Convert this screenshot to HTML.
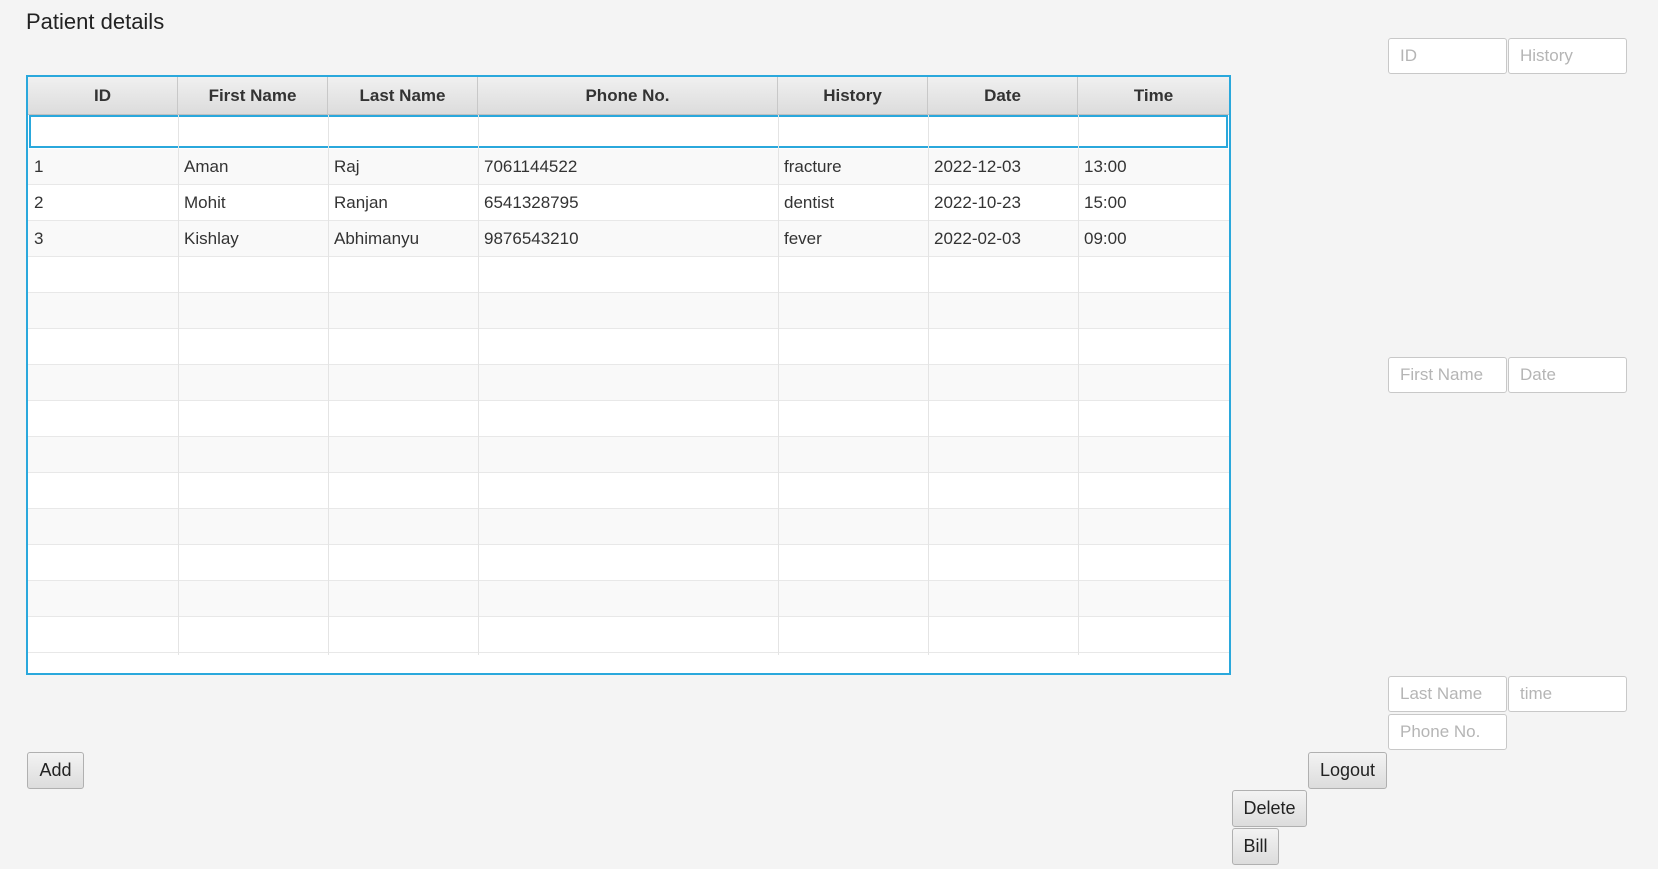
<!DOCTYPE html>
<html><head><meta charset="utf-8"><style>
*{box-sizing:border-box;margin:0;padding:0}
body{width:1658px;height:869px;background:#f4f4f4;font-family:"Liberation Sans",sans-serif;color:#333;position:relative;overflow:hidden}
.a{position:absolute}
.title{left:26px;top:9px;font-size:22px;color:#222}
.tbl{left:26px;top:75px;width:1205px;height:600px;border:2px solid #2aa8dc;background:#fff}
.cell{position:absolute;font-size:17px;line-height:36px;padding-left:6px;white-space:nowrap}
.hdr{position:absolute;top:0;height:38px;background:linear-gradient(#f0f0f0,#dcdcdc);border-right:1px solid #c8c8c8;border-bottom:1px solid #c0c0c0;font-weight:bold;font-size:17px;text-align:center;line-height:38px;color:#333}
.row{position:absolute;left:0;width:1201px;height:36px;border-bottom:1px solid #e8e8e8}
.vl{position:absolute;top:38px;width:1px;height:540px;background:#e4e4e4}
.fld{position:absolute;background:#fff;border:1px solid #c8c8c8;border-radius:3px;font-size:17px;color:#b5b5b5;padding-left:11px;line-height:34px}
.btn{position:absolute;background:linear-gradient(#f3f3f3,#dcdcdc);border:1px solid #b0b0b0;border-radius:3px;font-size:18px;color:#222;text-align:center;line-height:35px}
</style></head><body>
<div class="a title">Patient details</div>
<div class="a tbl">
<div class="hdr" style="left:0;width:150px">ID</div>
<div class="hdr" style="left:150px;width:150px">First Name</div>
<div class="hdr" style="left:300px;width:150px">Last Name</div>
<div class="hdr" style="left:450px;width:300px">Phone No.</div>
<div class="hdr" style="left:750px;width:150px">History</div>
<div class="hdr" style="left:900px;width:150px">Date</div>
<div class="hdr" style="left:1050px;width:151px;border-right:none">Time</div>
<div class="a" style="left:1px;top:38px;width:1199px;height:33px;border:2px solid #2aa8dc;background:#fff"></div>
<div class="row" style="top:72px;background:#f9f9f9"></div>
<div class="row" style="top:108px"></div>
<div class="row" style="top:144px;background:#f9f9f9"></div>
<div class="row" style="top:180px"></div>
<div class="row" style="top:216px;background:#f9f9f9"></div>
<div class="row" style="top:252px"></div>
<div class="row" style="top:288px;background:#f9f9f9"></div>
<div class="row" style="top:324px"></div>
<div class="row" style="top:360px;background:#f9f9f9"></div>
<div class="row" style="top:396px"></div>
<div class="row" style="top:432px;background:#f9f9f9"></div>
<div class="row" style="top:468px"></div>
<div class="row" style="top:504px;background:#f9f9f9"></div>
<div class="row" style="top:540px"></div>
<div class="vl" style="left:150px"></div><div class="vl" style="left:300px"></div><div class="vl" style="left:450px"></div><div class="vl" style="left:750px"></div><div class="vl" style="left:900px"></div><div class="vl" style="left:1050px"></div>
<div class="cell" style="left:0;top:72px">1</div><div class="cell" style="left:150px;top:72px">Aman</div><div class="cell" style="left:300px;top:72px">Raj</div><div class="cell" style="left:450px;top:72px">7061144522</div><div class="cell" style="left:750px;top:72px">fracture</div><div class="cell" style="left:900px;top:72px">2022-12-03</div><div class="cell" style="left:1050px;top:72px">13:00</div>
<div class="cell" style="left:0;top:108px">2</div><div class="cell" style="left:150px;top:108px">Mohit</div><div class="cell" style="left:300px;top:108px">Ranjan</div><div class="cell" style="left:450px;top:108px">6541328795</div><div class="cell" style="left:750px;top:108px">dentist</div><div class="cell" style="left:900px;top:108px">2022-10-23</div><div class="cell" style="left:1050px;top:108px">15:00</div>
<div class="cell" style="left:0;top:144px">3</div><div class="cell" style="left:150px;top:144px">Kishlay</div><div class="cell" style="left:300px;top:144px">Abhimanyu</div><div class="cell" style="left:450px;top:144px">9876543210</div><div class="cell" style="left:750px;top:144px">fever</div><div class="cell" style="left:900px;top:144px">2022-02-03</div><div class="cell" style="left:1050px;top:144px">09:00</div>
</div>
<div class="fld" style="left:1388px;top:38px;width:119px;height:36px">ID</div>
<div class="fld" style="left:1508px;top:38px;width:119px;height:36px">History</div>
<div class="fld" style="left:1388px;top:357px;width:119px;height:36px">First Name</div>
<div class="fld" style="left:1508px;top:357px;width:119px;height:36px">Date</div>
<div class="fld" style="left:1388px;top:676px;width:119px;height:36px">Last Name</div>
<div class="fld" style="left:1508px;top:676px;width:119px;height:36px">time</div>
<div class="fld" style="left:1388px;top:714px;width:119px;height:36px">Phone No.</div>
<div class="btn" style="left:27px;top:752px;width:57px;height:37px">Add</div>
<div class="btn" style="left:1308px;top:752px;width:79px;height:37px">Logout</div>
<div class="btn" style="left:1232px;top:790px;width:75px;height:37px">Delete</div>
<div class="btn" style="left:1232px;top:828px;width:47px;height:37px">Bill</div>
</body></html>
